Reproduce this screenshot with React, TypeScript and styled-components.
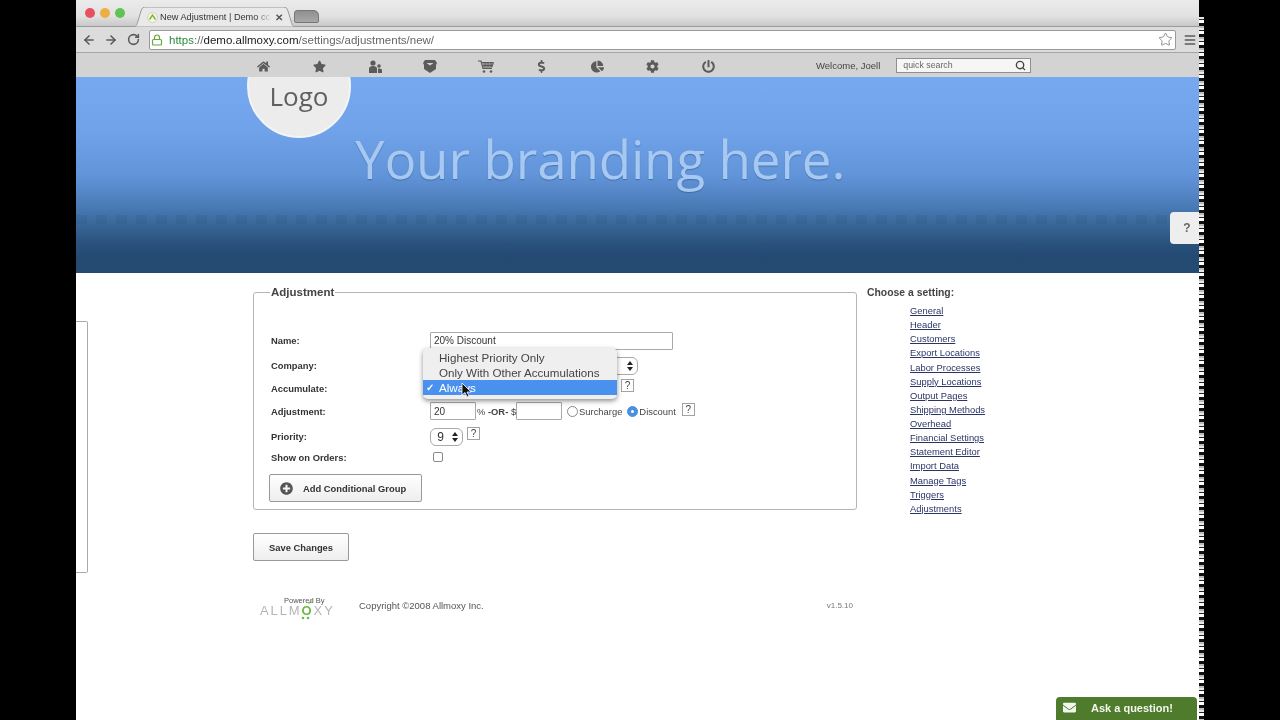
import styled, { createGlobalStyle } from "styled-components";
import { ArrowLeft, ArrowRight, RotateCw, Star, Menu as MenuIcon, Lock, Search } from "lucide-react";
import { FaHome, FaStar, FaDollarSign, FaChartPie, FaCog, FaPowerOff, FaPlusCircle, FaEnvelope } from "react-icons/fa";

const GlobalStyle = createGlobalStyle`
  html, body {
    margin: 0;
    height: 100%;
    background: #000;
    overflow: hidden;
    font-family: "Liberation Sans", Arial, sans-serif;
  }
  * { box-sizing: border-box; }
`;

const Stage = styled.div`
  display: flex;
  width: 1280px;
  height: 720px;
  padding-left: 76px;
  filter: blur(0.35px);
`;

const Screen = styled.div`
  position: relative;
  width: 1123px;
  height: 720px;
  background: #fff;
  display: flex;
  flex-direction: column;
  overflow: hidden;
`;

const NoiseStrip = styled.div`
  width: 5px;
  margin-top: 17px;
  background: repeating-linear-gradient(180deg, #e8e8e8 0 2px, #222 2px 3px, #fff 3px 6px, #111 6px 9px, #bbb 9px 11px);
`;

const TabBar = styled.div`
  display: flex;
  align-items: flex-end;
  height: 27px;
  padding-left: 9px;
  background: linear-gradient(180deg, #ebebeb 0%, #e2e2e2 60%, #c8c8c8 100%);
  border-bottom: 1px solid #9a9a9a;
`;

const Lights = styled.div`
  display: flex;
  gap: 5px;
  align-self: flex-start;
  margin-top: 8px;
`;

const Light = styled.span<{ $color: string }>`
  width: 10px;
  height: 10px;
  border-radius: 50%;
  background: ${(p) => p.$color};
`;

const Tab = styled.div`
  position: relative;
  display: flex;
  align-items: center;
  width: 163px;
  height: 20px;
  margin-left: 8px;
  margin-bottom: -1px;
  padding-left: 13.5px;
  font-size: 9.2px;
  color: #333;
`;

const TabShape = styled.svg`
  position: absolute;
  left: 0;
  top: 0;
`;

const TabIcon = styled.svg`
  position: relative;
  flex: none;
  margin-right: 2.5px;
`;

const TabTitle = styled.span`
  position: relative;
  width: 112px;
  white-space: nowrap;
  -webkit-mask-image: linear-gradient(90deg, #000 85%, transparent 100%);
  mask-image: linear-gradient(90deg, #000 85%, transparent 100%);
`;

const TabClose = styled.span`
  position: relative;
  margin-left: 3px;
  font-size: 10px;
  font-weight: bold;
  color: #555;
`;

const NewTab = styled.div`
  width: 25px;
  height: 13px;
  margin-left: -2px;
  margin-bottom: 3px;
  border: 1px solid #777;
  border-radius: 3px 5px 2px 2px;
  background: linear-gradient(180deg, #8f8f8f, #a8a8a8);
`;

const ToolBar = styled.div`
  display: flex;
  align-items: center;
  height: 26px;
  padding-left: 2px;
  background: #dcdcdc;
  color: #5a5a5a;
  border-bottom: 1px solid #a6a6a6;
`;

const ToolButton = styled.span`
  display: flex;
  justify-content: center;
  width: 22px;
`;

const HamburgerButton = styled(ToolButton)`
  width: 23px;
  padding-left: 5px;
`;

const AddressBar = styled.div`
  display: flex;
  align-items: center;
  flex: 1;
  height: 20px;
  margin-left: 5px;
  padding-left: 1px;
  background: #fff;
  border: 1px solid #9a9a9a;
  border-radius: 2px;
  font-size: 11.5px;
  color: #666;
`;

const Https = styled.span`
  margin-left: 6px;
  color: #2b8a3e;
`;

const Host = styled.span`
  color: #1a1a1a;
`;

const StarButton = styled.span`
  display: flex;
  margin-left: auto;
  margin-right: 2px;
  color: #777;
`;

const NavBar = styled.div`
  display: flex;
  align-items: center;
  height: 24px;
  padding-left: 160px;
  background: #d3d3d3;
  font-size: 9.5px;
  color: #444;
`;

const NavIcons = styled.div`
  display: flex;
  width: 500px;
  margin-top: 2px;
`;

const NavIcon = styled.span`
  display: flex;
  justify-content: center;
  width: 55.6px;
  color: #5b5b5b;
  font-size: 13px;
`;

const Welcome = styled.span`
  margin-left: 80px;
`;

const SearchBox = styled.div`
  display: flex;
  align-items: center;
  justify-content: space-between;
  width: 135px;
  height: 15px;
  margin-left: 16px;
  padding: 0 4px 0 6px;
  background: #f6f6f6;
  border: 1px solid #8f8f8f;
  font-size: 8.8px;
  color: #666;
`;

const Banner = styled.header`
  position: relative;
  height: 196px;
  padding: 44px 0 0 279px;
  overflow: hidden;
  background:
    repeating-linear-gradient(90deg, rgba(25, 55, 95, 0.1) 0 11px, transparent 11px 20px) 0 138px / 100% 9px no-repeat,
    linear-gradient(180deg, #77a9f0 0%, #70a2e9 28%, #6294da 50%, #4a7bb6 66%, #386595 76%, #29517c 85%, #244a72 92%, #264b72 100%);
`;

const LogoBadge = styled.div`
  position: absolute;
  left: 171px;
  top: -43px;
  display: flex;
  align-items: flex-end;
  justify-content: center;
  width: 104px;
  height: 104px;
  padding-bottom: 22px;
  border-radius: 50%;
  background: #ececec;
  border: 2px solid #f4f4f4;
  font-family: "Open Sans", sans-serif;
  font-size: 26px;
  color: #5f5f5f;
`;

const Branding = styled.h1`
  margin: 0;
  font-family: "Open Sans", sans-serif;
  font-weight: 400;
  font-size: 53px;
  letter-spacing: -0.2px;
  line-height: 76px;
  white-space: nowrap;
  color: #a6c8f1;
  text-shadow: 0 1px 1px rgba(40, 80, 130, 0.5);
`;

const HelpTab = styled.div`
  position: absolute;
  right: 0;
  top: 212px;
  display: flex;
  align-items: center;
  justify-content: center;
  width: 29px;
  height: 32px;
  padding-left: 5px;
  background: #eeeeee;
  border-radius: 4px 0 0 4px;
  font-size: 12px;
  font-weight: bold;
  color: #666;
`;

const Content = styled.main`
  display: flex;
  align-items: flex-start;
  flex: 1;
  color: #333;
  font-size: 9.4px;
`;

const SideStub = styled.div`
  width: 12px;
  height: 252px;
  margin-top: 48px;
  border: 1px solid #aaa;
  border-left: 0;
  border-radius: 0 2px 2px 0;
`;

const FormColumn = styled.div`
  width: 604px;
  margin: 12px 0 0 165px;
`;

const Fieldset = styled.fieldset`
  margin: 0;
  padding: 29px 0 7px 17px;
  min-width: 0;
  border: 1px solid #b5b5b5;
  border-radius: 3px;
`;

const Legend = styled.legend`
  margin-left: -1px;
  padding: 0 1px;
  font-size: 11.5px;
  font-weight: bold;
  line-height: 14px;
  color: #444;
`;

const Row = styled.div<{ $h: number }>`
  display: grid;
  grid-template-columns: 159px 1fr;
  align-items: center;
  height: ${(p) => p.$h}px;
`;

const Label = styled.label`
  font-weight: bold;
  font-size: 9.4px;
  color: #333;
`;

const Controls = styled.div`
  position: relative;
  display: flex;
  align-items: center;
  gap: 4px;
`;

const AdjustControls = styled(Controls)`
  gap: 0;
`;

const TextInput = styled.input<{ $w: number }>`
  width: ${(p) => p.$w}px;
  height: 18px;
  padding: 0 3px;
  border: 1px solid #a9a9a9;
  border-radius: 1px;
  background: #fff;
  font: 10px "Liberation Sans", Arial, sans-serif;
  color: #333;
`;

const FakeSelect = styled.div<{ $w: number }>`
  display: flex;
  align-items: center;
  justify-content: flex-end;
  gap: 8px;
  width: ${(p) => p.$w}px;
  height: 18px;
  padding: 0 4px;
  border: 1px solid #a9a9a9;
  border-radius: 6px;
  background: #fff;
  font-size: 12px;
  color: #333;
`;

const Arrows = styled.svg`
  flex: none;
`;

const HelpBox = styled.span<{ $up?: number; $left?: number }>`
  display: flex;
  align-items: center;
  justify-content: center;
  width: 13px;
  height: 13px;
  margin-top: ${(p) => -(p.$up ?? 0)}px;
  margin-left: ${(p) => p.$left ?? 0}px;
  border: 1px solid #a3a3a3;
  font-size: 10px;
  color: #444;
`;

const Inline = styled.span<{ $bold?: boolean }>`
  font-weight: ${(p) => (p.$bold ? "bold" : "normal")};
  font-size: 9.4px;
  white-space: pre;
  color: #444;
`;

const Between = styled.span`
  margin-left: 1px;
  white-space: pre;
`;

const RadioGroup = styled.div`
  display: flex;
  align-items: center;
  margin-left: 5px;
`;

const Radio = styled.span<{ $on?: boolean }>`
  display: flex;
  align-items: center;
  justify-content: center;
  width: 11px;
  height: 11px;
  margin-right: 1px;
  border-radius: 50%;
  border: 1px solid ${(p) => (p.$on ? "#4a90e2" : "#8a8a8a")};
  background: ${(p) => (p.$on ? "#4a90e2" : "#fff")};
  &::after {
    content: "";
    display: ${(p) => (p.$on ? "block" : "none")};
    width: 3px;
    height: 3px;
    border-radius: 50%;
    background: #fff;
  }
`;

const Checkbox = styled.span`
  width: 10px;
  height: 10px;
  margin-left: 3px;
  border: 1px solid #8a8a8a;
  border-radius: 2px;
  background: #fff;
`;

const Button = styled.button<{ $w: number }>`
  display: flex;
  align-items: center;
  justify-content: center;
  gap: 10px;
  width: ${(p) => p.$w}px;
  height: 28px;
  padding: 0;
  background: linear-gradient(180deg, #ffffff 0%, #eeeeee 100%);
  border: 1px solid #999;
  border-radius: 2px;
  font: bold 9.4px "Liberation Sans", Arial, sans-serif;
  color: #333;
`;

const AddButton = styled(Button)`
  margin: 10px 0 0 -2px;
  justify-content: flex-start;
  padding-left: 10px;
  svg { color: #555; }
`;

const SaveButton = styled(Button)`
  margin-top: 23px;
`;

const DropMenu = styled.div`
  position: absolute;
  left: -7px;
  top: -32px;
  width: 194px;
  height: 51px;
  padding-top: 2px;
  z-index: 3;
  background: #efefef;
  border-radius: 5px;
  box-shadow: 0 2px 5px rgba(0, 0, 0, 0.45);
  font-size: 11.6px;
`;

const MenuItem = styled.div<{ $active?: boolean }>`
  position: relative;
  height: 15px;
  padding-left: 16px;
  line-height: 15px;
  white-space: nowrap;
  color: ${(p) => (p.$active ? "#fff" : "#444")};
  background: ${(p) => (p.$active ? "#4a90ee" : "transparent")};
`;

const Check = styled.span`
  position: absolute;
  left: 3px;
  font-size: 10px;
  font-weight: bold;
`;

const Cursor = styled.svg`
  position: absolute;
  left: 38px;
  top: 34px;
`;

const Footer = styled.footer`
  display: flex;
  align-items: center;
  height: 28px;
  margin-top: 30px;
  padding: 0 4px 0 7px;
  font-size: 9.5px;
  color: #555;
`;

const FooterLogo = styled.div`
  position: relative;
  width: 73px;
  height: 28px;
  color: #b5b5b5;
`;

const PoweredBy = styled.span`
  position: absolute;
  left: 24px;
  top: 6px;
  font-size: 7.5px;
  line-height: 8px;
  white-space: nowrap;
  color: #555;
`;

const WordMark = styled.span`
  position: absolute;
  left: 0;
  top: 14px;
  font-size: 13px;
  line-height: 12px;
  letter-spacing: 1.9px;
  white-space: nowrap;
`;

const GreenO = styled.span`
  font-weight: bold;
  color: #6dbb45;
`;

const CartWheels = styled.svg`
  position: absolute;
  left: 38px;
  top: 9px;
`;

const Copyright = styled.span`
  margin-left: 26px;
`;

const Version = styled.span`
  margin-left: auto;
  font-size: 8px;
  color: #777;
`;

const Sidebar = styled.aside`
  margin: 13px 0 0 10px;
`;

const SideTitle = styled.div`
  font-weight: bold;
  font-size: 10.4px;
  line-height: 14px;
  color: #444;
`;

const SideList = styled.ul`
  margin: 4px 0 0;
  padding: 0 0 0 43px;
  list-style: none;
`;

const SideLink = styled.li`
  height: 14.14px;
  line-height: 14px;
  font-size: 9.4px;
  color: #2a3566;
  text-decoration: underline;
`;

const ChatButton = styled.div`
  position: absolute;
  right: 2px;
  bottom: 0;
  display: flex;
  align-items: center;
  gap: 15px;
  width: 141px;
  height: 23px;
  padding: 0 0 2px 7px;
  background: #4f7b2d;
  border-radius: 4px 4px 0 0;
  font-size: 11px;
  font-weight: bold;
  color: #f2f6ee;
`;

const settings = [
  "General", "Header", "Customers", "Export Locations", "Labor Processes",
  "Supply Locations", "Output Pages", "Shipping Methods", "Overhead",
  "Financial Settings", "Statement Editor", "Import Data", "Manage Tags",
  "Triggers", "Adjustments",
];

const UpDown = () => (
  <Arrows width="6" height="10" viewBox="0 0 6 10" fill="#222">
    <path d="M3 0 6 4H0zM3 10 0 6h6z" />
  </Arrows>
);

const PeopleIcon = () => (
  <svg width="14" height="13" viewBox="0 0 14 13" fill="currentColor">
    <circle cx="5" cy="3" r="2.6" />
    <path d="M1 13V8.5C1 7 2.500 6 5 6s4 1 4 2.500V13z" />
    <circle cx="11" cy="6" r="1.800" />
    <path d="M10 13V8.500h1.500c1.300 0 2.500.7 2.500 1.800V13z" />
  </svg>
);

const BoxIcon = () => (
  <svg width="14" height="13" viewBox="0 0 14 13" fill="currentColor">
    <path d="M2 0h10l2 3-1 2v4l-6 4-6-4V5L0 3z" />
    <path d="M3.500 3h7L7 5.500z" fill="#d3d3d3" />
  </svg>
);

const CartIcon = () => (
  <svg width="16" height="13" viewBox="0 0 16 13" fill="none" stroke="currentColor">
    <path d="M0 1h3l2 7.500h9" strokeWidth="1.200" />
    <path d="M4 2.500h11.500L14 7H5M4.500 4h10.500M5 5.500h10M7 2.500V7M10 2.500V7M13 2.500V7" strokeWidth="1" />
    <circle cx="6" cy="11.500" r="1.300" fill="currentColor" stroke="none" />
    <circle cx="13" cy="11.500" r="1.300" fill="currentColor" stroke="none" />
  </svg>
);

const App = () => {
  return (
    <>
      <GlobalStyle />
      <Stage>
        <Screen>
          <TabBar>
            <Lights>
              <Light $color="#e8505f" />
              <Light $color="#efae45" />
              <Light $color="#5fc454" />
            </Lights>
            <Tab>
              <TabShape width="163" height="20" viewBox="0 0 163 20">
                <path d="M0 20C3 20 4 18 5 14L8 4C9 1 10 0 13 0H150C153 0 154 1 155 4L158 14C159 18 160 20 163 20Z" fill="#e9e9e9" stroke="#9a9a9a" />
              </TabShape>
              <TabIcon width="11" height="11" viewBox="0 0 11 11">
                <circle cx="5.500" cy="5.500" r="5" fill="#f4f4e8" stroke="#cfd8b0" />
                <path d="M2.500 7.500 5.500 3l3 4.500" fill="none" stroke="#7fb440" strokeWidth="1.400" />
              </TabIcon>
              <TabTitle>New Adjustment | Demo cc</TabTitle>
              <TabClose>✕</TabClose>
            </Tab>
            <NewTab />
          </TabBar>
          <ToolBar>
            <ToolButton><ArrowLeft size={14} strokeWidth={2.6} /></ToolButton>
            <ToolButton><ArrowRight size={14} strokeWidth={2.6} /></ToolButton>
            <ToolButton><RotateCw size={13} strokeWidth={2.8} /></ToolButton>
            <AddressBar>
              <Lock size={12} color="#69a83c" strokeWidth={2.4} />
              <Https>https</Https>://<Host>demo.allmoxy.com</Host>/settings/adjustments/new/
              <StarButton><Star size={15} strokeWidth={1.3} /></StarButton>
            </AddressBar>
            <HamburgerButton><MenuIcon size={14} strokeWidth={2.6} /></HamburgerButton>
          </ToolBar>
          <NavBar>
            <NavIcons>
              <NavIcon><FaHome /></NavIcon>
              <NavIcon><FaStar /></NavIcon>
              <NavIcon><PeopleIcon /></NavIcon>
              <NavIcon><BoxIcon /></NavIcon>
              <NavIcon><CartIcon /></NavIcon>
              <NavIcon><FaDollarSign /></NavIcon>
              <NavIcon><FaChartPie /></NavIcon>
              <NavIcon><FaCog /></NavIcon>
              <NavIcon><FaPowerOff /></NavIcon>
            </NavIcons>
            <Welcome>Welcome, Joell</Welcome>
            <SearchBox>
              quick search
              <Search size={11} strokeWidth={3} color="#444" />
            </SearchBox>
          </NavBar>
          <Banner>
            <LogoBadge>Logo</LogoBadge>
            <Branding>Your branding here.</Branding>
          </Banner>
          <HelpTab>?</HelpTab>
          <Content>
            <SideStub />
            <FormColumn>
              <Fieldset>
                <Legend>Adjustment</Legend>
                <Row $h={25}>
                  <Label>Name:</Label>
                  <Controls><TextInput $w={243} readOnly value="20% Discount" /></Controls>
                </Row>
                <Row $h={25}>
                  <Label>Company:</Label>
                  <Controls>
                    <FakeSelect $w={208}><UpDown /></FakeSelect>
                  </Controls>
                </Row>
                <Row $h={21}>
                  <Label>Accumulate:</Label>
                  <Controls>
                    <FakeSelect $w={187}><UpDown /></FakeSelect>
                    <HelpBox $up={6}>?</HelpBox>
                    <DropMenu>
                      <MenuItem>Highest Priority Only</MenuItem>
                      <MenuItem>Only With Other Accumulations</MenuItem>
                      <MenuItem $active><Check>✓</Check>Always</MenuItem>
                      <Cursor width="11" height="16" viewBox="0 0 11 16">
                        <path d="M1 1v12l3-2.500L6 15l2-1-2-4h4z" fill="#111" stroke="#fff" strokeWidth="0.800" />
                      </Cursor>
                    </DropMenu>
                  </Controls>
                </Row>
                <Row $h={24}>
                  <Label>Adjustment:</Label>
                  <AdjustControls>
                    <TextInput $w={46} readOnly value="20" />
                    <Between>
                      <Inline>% </Inline><Inline $bold>-OR- </Inline><Inline>$</Inline>
                    </Between>
                    <TextInput $w={46} readOnly value="" />
                    <RadioGroup><Radio /><Inline>Surcharge</Inline></RadioGroup>
                    <RadioGroup><Radio $on /><Inline>Discount</Inline></RadioGroup>
                    <HelpBox $up={3} $left={6}>?</HelpBox>
                  </AdjustControls>
                </Row>
                <Row $h={27}>
                  <Label>Priority:</Label>
                  <Controls>
                    <FakeSelect $w={33}>9<UpDown /></FakeSelect>
                    <HelpBox $up={6}>?</HelpBox>
                  </Controls>
                </Row>
                <Row $h={14}>
                  <Label>Show on Orders:</Label>
                  <Controls><Checkbox /></Controls>
                </Row>
                <AddButton $w={153}><FaPlusCircle size={13} />Add Conditional Group</AddButton>
              </Fieldset>
              <SaveButton $w={96}>Save Changes</SaveButton>
              <Footer>
                <FooterLogo>
                  <PoweredBy>Powered By</PoweredBy>
                  <WordMark>ALLM<GreenO>O</GreenO>XY</WordMark>
                  <CartWheels width="16" height="20" viewBox="0 0 16 20" fill="none">
                    <path d="M14 1c-2 0-3 1-3 3" stroke="#6dbb45" />
                    <circle cx="5" cy="18" r="1.300" fill="#6dbb45" />
                    <circle cx="10" cy="18" r="1.300" fill="#6dbb45" />
                  </CartWheels>
                </FooterLogo>
                <Copyright>Copyright ©2008 Allmoxy Inc.</Copyright>
                <Version>v1.5.10</Version>
              </Footer>
            </FormColumn>
            <Sidebar>
              <SideTitle>Choose a setting:</SideTitle>
              <SideList>
                {settings.map((s) => (
                  <SideLink key={s}>{s}</SideLink>
                ))}
              </SideList>
            </Sidebar>
          </Content>
          <ChatButton>
            <FaEnvelope size={13} />
            <span>Ask a question!</span>
          </ChatButton>
        </Screen>
        <NoiseStrip />
      </Stage>
    </>
  );
};

export default App;
